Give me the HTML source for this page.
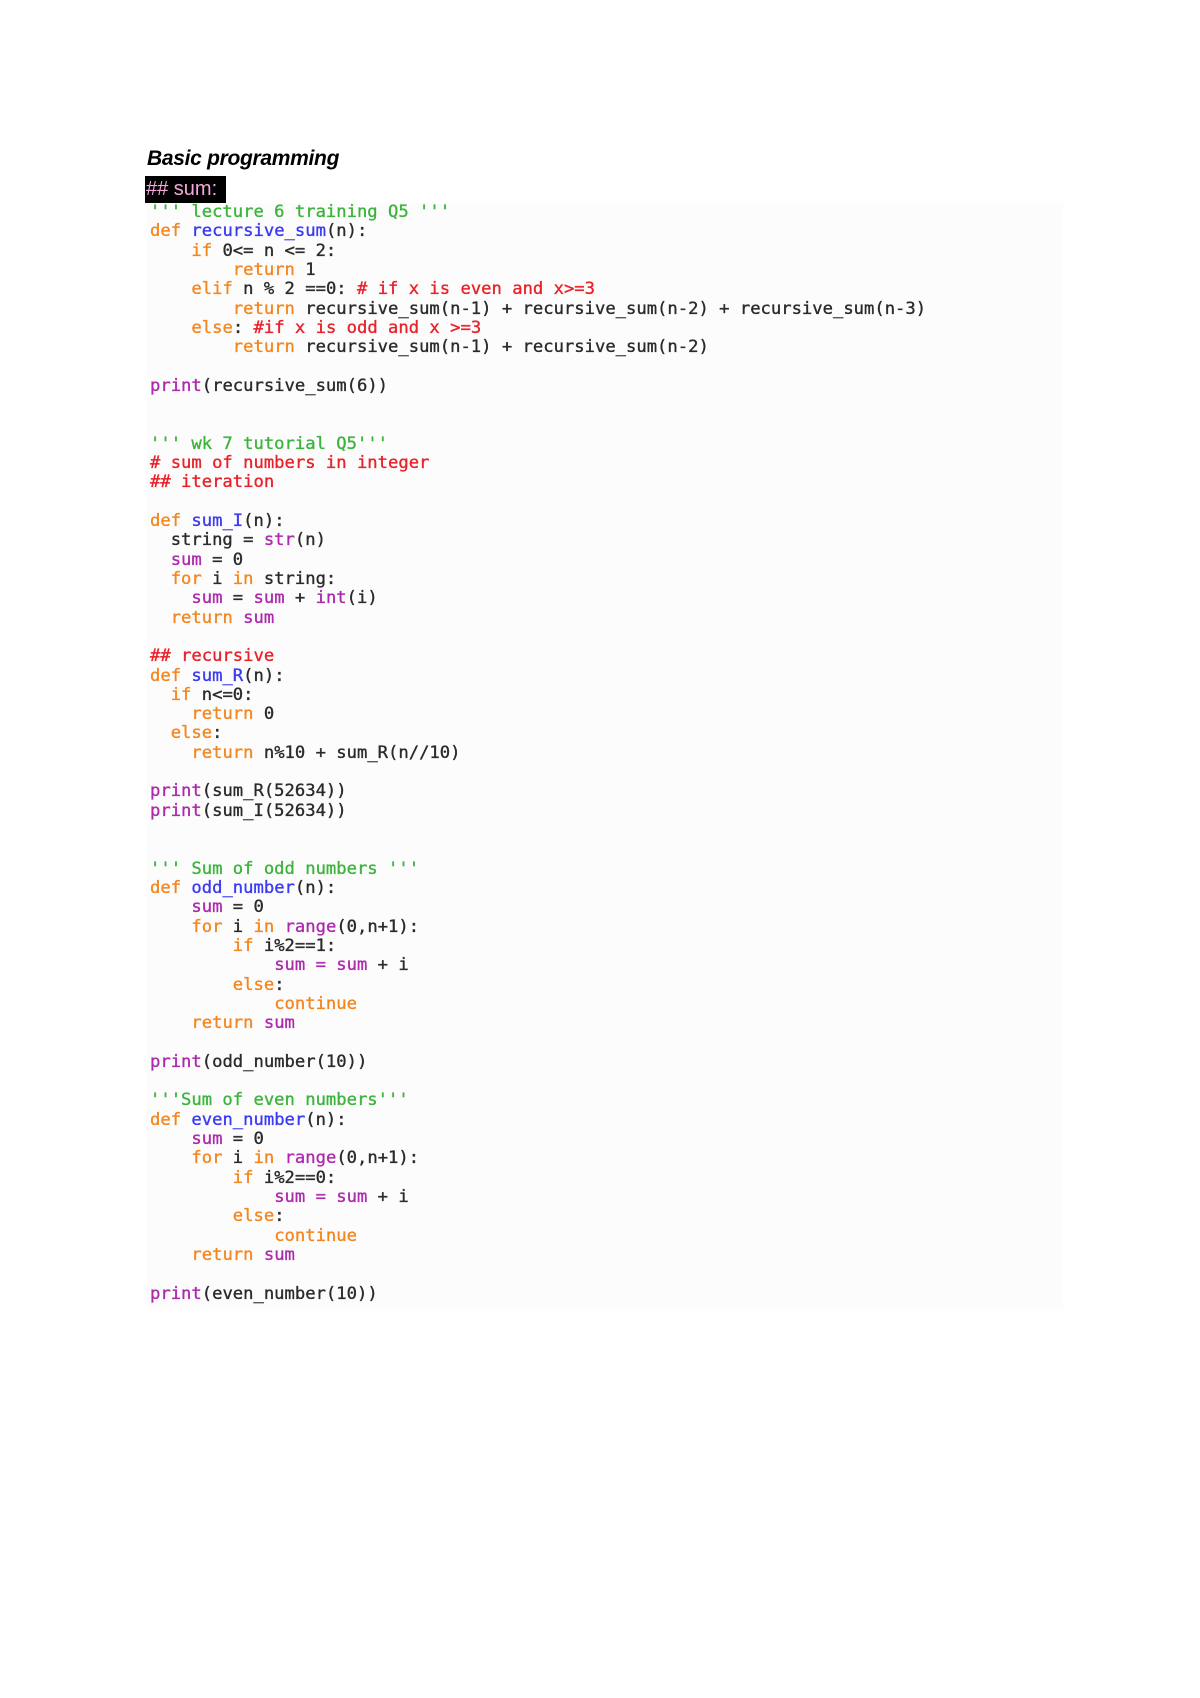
<!DOCTYPE html>
<html><head><meta charset="utf-8"><style>
html,body{margin:0;padding:0;background:#fff;width:1200px;height:1698px;overflow:hidden}
.t{position:absolute;left:147px;top:147px;font:italic bold 21px "Liberation Sans",sans-serif;color:#000;letter-spacing:-0.3px}
.s{position:absolute;left:145px;top:176px;height:27px;width:81px;background:#000;color:#f4a8dc;font:20px/27px "Liberation Sans",sans-serif;padding-left:1px;box-sizing:border-box}
.bg{position:absolute;left:147px;top:203px;width:916px;height:1106px;background:#fcfcfc}
pre{position:absolute;left:150px;top:203px;margin:0;font:17.2px/19.32px "DejaVu Sans Mono",monospace;color:#2a2a2a;-webkit-text-stroke:0.35px}
.o{color:#f5861f}.g{color:#3cb43c}.b{color:#3a3af2}.r{color:#e8222a}.p{color:#ad2aad}
</style></head><body>
<div class="bg"></div>
<div class="t">Basic programming</div>
<div class="s">## sum:</div>
<pre><span class="g">''' lecture 6 training Q5 '''</span>
<span class="o">def</span> <span class="b">recursive_sum</span>(n):
    <span class="o">if</span> 0&lt;= n &lt;= 2:
        <span class="o">return</span> 1
    <span class="o">elif</span> n % 2 ==0: <span class="r"># if x is even and x&gt;=3</span>
        <span class="o">return</span> recursive_sum(n-1) + recursive_sum(n-2) + recursive_sum(n-3)
    <span class="o">else</span>: <span class="r">#if x is odd and x &gt;=3</span>
        <span class="o">return</span> recursive_sum(n-1) + recursive_sum(n-2)

<span class="p">print</span>(recursive_sum(6))


<span class="g">''' wk 7 tutorial Q5'''</span>
<span class="r"># sum of numbers in integer</span>
<span class="r">## iteration</span>

<span class="o">def</span> <span class="b">sum_I</span>(n):
  string = <span class="p">str</span>(n)
  <span class="p">sum</span> = 0
  <span class="o">for</span> i <span class="o">in</span> string:
    <span class="p">sum</span> = <span class="p">sum</span> + <span class="p">int</span>(i)
  <span class="o">return</span> <span class="p">sum</span>

<span class="r">## recursive</span>
<span class="o">def</span> <span class="b">sum_R</span>(n):
  <span class="o">if</span> n&lt;=0:
    <span class="o">return</span> 0
  <span class="o">else</span>:
    <span class="o">return</span> n%10 + sum_R(n//10)

<span class="p">print</span>(sum_R(52634))
<span class="p">print</span>(sum_I(52634))


<span class="g">''' Sum of odd numbers '''</span>
<span class="o">def</span> <span class="b">odd_number</span>(n):
    <span class="p">sum</span> = 0
    <span class="o">for</span> i <span class="o">in</span> <span class="p">range</span>(0,n+1):
        <span class="o">if</span> i%2==1:
            <span class="p">sum = sum</span> + i
        <span class="o">else</span>:
            <span class="o">continue</span>
    <span class="o">return</span> <span class="p">sum</span>

<span class="p">print</span>(odd_number(10))

<span class="g">'''Sum of even numbers'''</span>
<span class="o">def</span> <span class="b">even_number</span>(n):
    <span class="p">sum</span> = 0
    <span class="o">for</span> i <span class="o">in</span> <span class="p">range</span>(0,n+1):
        <span class="o">if</span> i%2==0:
            <span class="p">sum = sum</span> + i
        <span class="o">else</span>:
            <span class="o">continue</span>
    <span class="o">return</span> <span class="p">sum</span>

<span class="p">print</span>(even_number(10))</pre>
</body></html>
